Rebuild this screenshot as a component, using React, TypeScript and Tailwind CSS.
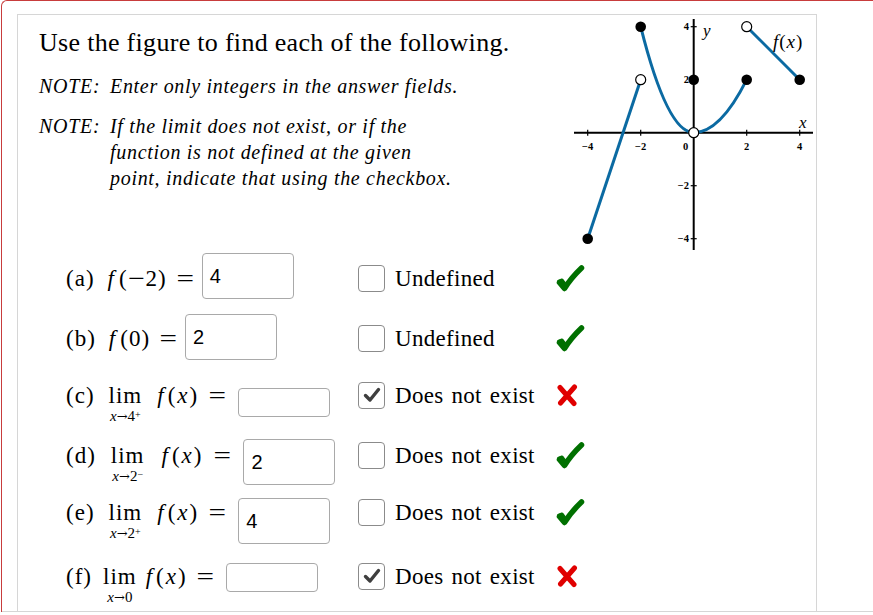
import React from "react";

// graph coordinate helpers (svg local space)
const X = (v: number) => 123.7 + 26.5 * v;
const Y = (v: number) => 117.7 - 26.5 * v;

const serif = "font-['Liberation_Serif','Times_New_Roman',serif]";

function Graph() {
  const blue = "#0b6aa2";
  const filled: [number, number][] = [
    [-4, -4],
    [-2, 4],
    [0, 2],
    [2, 2],
    [4, 2],
  ];
  const open: [number, number][] = [
    [-2, 2],
    [0, 0],
    [2, 4],
  ];
  const ticks = [-4, -2, 2, 4];

  return (
    <svg width="246" height="235" viewBox="0 0 246 235" className="shrink-0">
      {/* axes */}
      <line x1="4" y1={Y(0)} x2="243" y2={Y(0)} stroke="#000" strokeWidth="2" />
      <line x1={X(0)} y1="4" x2={X(0)} y2="235" stroke="#000" strokeWidth="2" />
      {ticks.map((t) => (
        <g key={t}>
          <line x1={X(t)} y1={Y(0) - 3} x2={X(t)} y2={Y(0) + 3} stroke="#000" strokeWidth="1.2" />
          <line x1={X(0) - 3} y1={Y(t)} x2={X(0) + 3} y2={Y(t)} stroke="#000" strokeWidth="1.2" />
        </g>
      ))}

      {/* tick labels */}
      <g fontFamily="Liberation Serif, serif" fontWeight="bold" fontSize="10.5">
        {ticks.map((t) => (
          <text key={"x" + t} x={X(t)} y="134.5" textAnchor="middle">
            {t < 0 ? "\u2212" + Math.abs(t) : t}
          </text>
        ))}
        <text x="115.7" y="134.5" textAnchor="middle">0</text>
        {ticks.map((t) => (
          <text key={"y" + t} x="119" y={Y(t) + 3.5} textAnchor="end">
            {t < 0 ? "\u2212" + Math.abs(t) : t}
          </text>
        ))}
      </g>

      {/* curve pieces */}
      <g stroke={blue} strokeWidth="3" fill="none">
        <line x1={X(-4)} y1={Y(-4)} x2={X(-2)} y2={Y(2)} />
        <path d={`M ${X(-2)} ${Y(4)} Q ${X(-1)} ${Y(0)} ${X(0)} ${Y(0)}`} />
        <path d={`M ${X(0)} ${Y(0)} Q ${X(1)} ${Y(0)} ${X(2)} ${Y(2)}`} />
        <line x1={X(2)} y1={Y(4)} x2={X(4)} y2={Y(2)} />
      </g>

      {filled.map(([a, b]) => (
        <circle key={`f${a}${b}`} cx={X(a)} cy={Y(b)} r="5.3" fill="#000" />
      ))}
      {open.map(([a, b]) => (
        <circle key={`o${a}${b}`} cx={X(a)} cy={Y(b)} r="5" fill="#fff" stroke="#000" strokeWidth="1.2" />
      ))}

      {/* axis labels */}
      <g fontFamily="Liberation Serif, serif" fontStyle="italic">
        <text x="133" y="20.5" fontSize="17">y</text>
        <text x="229" y="113.3" fontSize="17">x</text>
        <text x="203" y="33" fontSize="19" letterSpacing="1">
          f<tspan fontStyle="normal">(</tspan>x<tspan fontStyle="normal">)</tspan>
        </text>
      </g>
    </svg>
  );
}

function Eq({ ml }: { ml: number }) {
  return (
    <span className="inline-block w-[18px] text-center scale-x-[1.35]" style={{ marginLeft: ml }}>
      =
    </span>
  );
}

function Minus() {
  return <span className="inline-block mx-[2px] scale-x-[1.3]">{"\u2212"}</span>;
}

function ValueLabel({ tag, arg }: { tag: string; arg: React.ReactNode }) {
  return (
    <span className="flex items-baseline leading-none tracking-[1px]">
      <span>({tag})</span>
      <span className="ml-[13px] italic tracking-[2px]">f</span>
      <span className="ml-[3px]">({arg})</span>
      <Eq ml={10} />
    </span>
  );
}

function LimitLabel({
  tag,
  to,
  side,
  limGap,
  fGap,
  eqGap,
}: {
  tag: string;
  to: string;
  side?: string;
  limGap: number;
  fGap: number;
  eqGap: number;
}) {
  return (
    <span className="flex items-baseline leading-none tracking-[1px]">
      <span>({tag})</span>
      <span className="flex flex-col items-center" style={{ marginLeft: limGap }}>
        <span className="leading-[18px]">lim</span>
        <span className="text-[15px] leading-none mt-[4px] -mb-[17px] whitespace-nowrap tracking-normal">
          <i>x</i>
          <span className="font-['DejaVu_Serif',serif] text-[13px]">{"\u2192"}</span>
          {to}
          {side && <span className="relative -top-[3px] text-[10px] leading-none">{side}</span>}
        </span>
      </span>
      <span className="tracking-[2px]" style={{ marginLeft: fGap }}>
        <i>f</i>
        <span className="ml-[2px]">(</span>
        <i>x</i>)
      </span>
      <Eq ml={eqGap} />
    </span>
  );
}

interface RowData {
  key: string;
  label: React.ReactNode;
  value: string;
  inputCls: string;
  checked: boolean;
  text: string;
  ok: boolean;
  mt: string;
}

const rows: RowData[] = [
  {
    key: "a",
    label: (
      <ValueLabel
        tag="a"
        arg={
          <>
            <Minus />2
          </>
        }
      />
    ),
    value: "4",
    inputCls: "h-[46px] mb-[4px] ml-[7px]",
    checked: false,
    text: "Undefined",
    ok: true,
    mt: "mt-[8px]",
  },
  {
    key: "b",
    label: <ValueLabel tag="b" arg="0" />,
    value: "2",
    inputCls: "h-[46px] mb-[2px] ml-[7px]",
    checked: false,
    text: "Undefined",
    ok: true,
    mt: "mt-[20px]",
  },
  {
    key: "c",
    label: <LimitLabel tag="c" to="4" side="+" limGap={14} fGap={15} eqGap={10} />,
    value: "",
    inputCls: "h-[29px] mt-[14px] ml-[11px]",
    checked: true,
    text: "Does not exist",
    ok: false,
    mt: "mt-[17px]",
  },
  {
    key: "d",
    label: <LimitLabel tag="d" to="2" side={"\u2212"} limGap={15} fGap={17} eqGap={11} />,
    value: "2",
    inputCls: "h-[46px] mt-[14px] ml-[11px]",
    checked: false,
    text: "Does not exist",
    ok: true,
    mt: "mt-[20px]",
  },
  {
    key: "e",
    label: <LimitLabel tag="e" to="2" side="+" limGap={14} fGap={15} eqGap={10} />,
    value: "4",
    inputCls: "h-[46px] mt-[18px] ml-[11px]",
    checked: false,
    text: "Does not exist",
    ok: true,
    mt: "mt-[17px]",
  },
  {
    key: "f",
    label: <LimitLabel tag="f" to="0" limGap={11} fGap={9} eqGap={9} />,
    value: "",
    inputCls: "h-[29px] mt-[3px] ml-[11px]",
    checked: true,
    text: "Does not exist",
    ok: false,
    mt: "mt-[24px]",
  },
];

function CheckBox({ checked }: { checked: boolean }) {
  return (
    <div className="w-[27px] h-[27px] rounded-[4px] border-[1.5px] border-[#8b8b8b] bg-white flex items-center justify-center shrink-0">
      {checked && (
        <svg width="20" height="20" viewBox="0 0 20 20">
          <polyline
            points="3.5,10.5 8,15 16.5,4.5"
            fill="none"
            stroke="#3f3f3f"
            strokeWidth="3.4"
            strokeLinecap="round"
            strokeLinejoin="round"
          />
        </svg>
      )}
    </div>
  );
}

function Mark({ ok }: { ok: boolean }) {
  if (ok) {
    return (
      <svg width="29" height="28" viewBox="0 0 29 28">
        <path d="M3.5 18.5 L8.5 24.5 Q15 14 25.5 4" fill="none" stroke="#007000" strokeWidth="5.5" strokeLinecap="round" strokeLinejoin="round" />
        <path d="M2.5 17.5 L6 16 L9 20" fill="none" stroke="#007000" strokeWidth="3" strokeLinecap="round" strokeLinejoin="round" />
      </svg>
    );
  }
  return (
    <svg width="23" height="23" viewBox="0 0 23 23">
      <g stroke="#e00000" strokeWidth="5" strokeLinecap="round">
        <line x1="4" y1="3.5" x2="18" y2="19.5" />
        <line x1="18.5" y1="3" x2="4.5" y2="19" />
      </g>
    </svg>
  );
}

function AnswerRow({ row }: { row: RowData }) {
  return (
    <div className={`flex items-center h-[40px] ${row.mt}`}>
      <div className="w-[292px] flex items-center text-[23px] text-black">
        {row.label}
        <div
          className={`w-[92px] ${row.inputCls} rounded-[4px] border-[1.5px] border-[#a9a9a9] bg-white flex items-center pl-[7px] font-['Liberation_Sans',Arial,sans-serif] text-[20px] text-black`}
        >
          {row.value}
        </div>
      </div>
      <div className="w-[198px] flex items-center">
        <CheckBox checked={row.checked} />
        <span className="ml-[10px] text-[23px] leading-none tracking-[0.3px] [word-spacing:2px]">{row.text}</span>
      </div>
      <Mark ok={row.ok} />
    </div>
  );
}

export default function App() {
  return (
    <div className={`w-[873px] h-[615px] bg-white overflow-hidden ${serif}`}>
      <div className="ml-px h-[612px] border-t border-l border-[#c83c3c] rounded-tl-[6px] flex flex-col">
        <div className="ml-[15px] mt-[13px] w-[800px] h-[597px] border-t border-l border-r border-[#d6d6d6] pl-[21px]">
          <div className="flex items-start">
            <div className="flex-1 text-black">
              <h1 className="mt-[15px] text-[26px] leading-[26px] tracking-[0.3px] font-normal">
                Use the figure to find each of the following.
              </h1>
              <div className="mt-[17px] flex text-[20px] leading-[26px] italic tracking-[0.7px]">
                <span className="w-[71px] shrink-0">NOTE:</span>
                <span>Enter only integers in the answer fields.</span>
              </div>
              <div className="mt-[14px] flex text-[20px] leading-[26px] italic tracking-[0.7px]">
                <span className="w-[71px] shrink-0">NOTE:</span>
                <span>
                  If the limit does not exist, or if the
                  <br />
                  function is not defined at the given
                  <br />
                  point, indicate that using the checkbox.
                </span>
              </div>
            </div>
            <Graph />
          </div>

          <div className="pl-[27px] flex flex-col">
            {rows.map((r) => (
              <AnswerRow key={r.key} row={r} />
            ))}
          </div>
        </div>
        <div className="border-t border-[#d6d6d6]" />
      </div>
    </div>
  );
}
